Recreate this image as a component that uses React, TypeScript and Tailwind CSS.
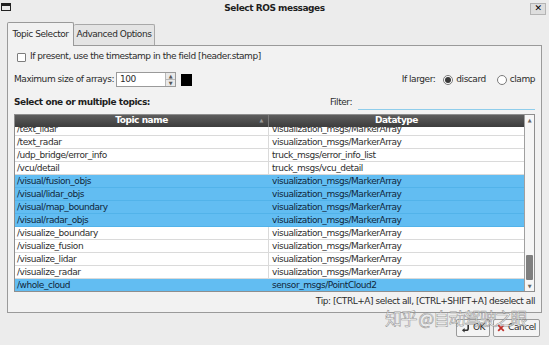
import React from 'react';

type Row = { topic: string; type: string; selected?: boolean };

const rows: Row[] = [
  { topic: '/text_lidar', type: 'visualization_msgs/MarkerArray' },
  { topic: '/text_radar', type: 'visualization_msgs/MarkerArray' },
  { topic: '/udp_bridge/error_info', type: 'truck_msgs/error_info_list' },
  { topic: '/vcu/detail', type: 'truck_msgs/vcu_detail' },
  { topic: '/visual/fusion_objs', type: 'visualization_msgs/MarkerArray', selected: true },
  { topic: '/visual/lidar_objs', type: 'visualization_msgs/MarkerArray', selected: true },
  { topic: '/visual/map_boundary', type: 'visualization_msgs/MarkerArray', selected: true },
  { topic: '/visual/radar_objs', type: 'visualization_msgs/MarkerArray', selected: true },
  { topic: '/visualize_boundary', type: 'visualization_msgs/MarkerArray' },
  { topic: '/visualize_fusion', type: 'visualization_msgs/MarkerArray' },
  { topic: '/visualize_lidar', type: 'visualization_msgs/MarkerArray' },
  { topic: '/visualize_radar', type: 'visualization_msgs/MarkerArray' },
  { topic: '/whole_cloud', type: 'sensor_msgs/PointCloud2', selected: true },
];

function Radio({ checked }: { checked?: boolean }) {
  return (
    <span className="flex h-[10px] w-[10px] items-center justify-center rounded-full border border-[#7a7a7a] bg-white">
      {checked && <span className="h-[6px] w-[6px] rounded-full bg-[#3a3a3a]" />}
    </span>
  );
}

function TopicRow({ row }: { row: Row }) {
  return (
    <div
      className={
        row.selected
          ? 'flex h-[13px] items-center border-b border-[#52b3ea] bg-[#62bdf2] text-[#10263a]'
          : 'flex h-[13px] items-center border-b border-[#dadada] bg-white text-[#2e2e2e]'
      }
    >
      <div className={row.selected ? 'w-[254px] pl-[2px] leading-[12px]' : 'w-[254px] pl-[2px] leading-[12px] border-r border-[#dadada] h-full'}>
        {row.topic}
      </div>
      <div className="flex-1 pl-[3px] leading-[12px]">{row.type}</div>
    </div>
  );
}

export default function App() {
  return (
    <div className="relative flex h-[345px] w-[549px] flex-col overflow-hidden bg-[#ececec] font-['DejaVu_Sans',sans-serif] text-[9px] tracking-[-0.45px] text-[#2b2b2b]">
      {/* title bar */}
      <div className="relative flex h-[17px] items-center justify-center">
        <span className="absolute left-[1px] top-[3px] h-[8px] w-[10px] border border-t-[3px] border-[#222]" />
        <span className="font-bold text-[#1e1e1e]">Select ROS messages</span>
        <span className="absolute right-[3px] top-[3px] flex h-[12px] w-[16px] items-center justify-center border border-[#b4b4b4] bg-[#dedede] text-[9px] font-bold text-black">
          ✕
        </span>
      </div>

      {/* tabs */}
      <div className="mt-[5px] flex items-end px-[7px]">
        <div className="relative z-10 -mb-px flex h-[24px] w-[67px] items-center justify-center rounded-t-[2px] border border-b-0 border-[#9a9a9a] bg-[#f2f2f2]">
          Topic Selector
        </div>
        <div className="flex h-[21px] w-[81px] items-center justify-center rounded-t-[2px] border border-l-0 border-b-0 border-[#a8a8a8] bg-[#e4e4e4]">
          Advanced Options
        </div>
      </div>

      {/* pane */}
      <div className="mx-[7px] flex flex-col border border-[#9a9a9a] bg-[#f2f2f2] px-[6px] pb-[4px] pt-[4px]">
        <div className="flex h-[14px] items-center gap-[4px] pl-[3px]">
          <span className="h-[9px] w-[9px] rounded-[1px] border border-[#7d7d7d] bg-white" />
          <span>If present, use the timestamp in the field [header.stamp]</span>
        </div>

        <div className="mt-[8px] flex h-[15px] items-center">
          <span className="w-[102px]">Maximum size of arrays:</span>
          <div className="flex h-[15px] w-[60px] items-stretch border border-[#9a9a9a] bg-white">
            <span className="flex flex-1 items-center pl-[3px]">100</span>
            <div className="flex w-[10px] flex-col border-l border-[#b8b8b8] bg-[#e9e9e9]">
              <span className="flex flex-1 items-center justify-center border-b border-[#b8b8b8] text-[5px] leading-none text-[#555]">▲</span>
              <span className="flex flex-1 items-center justify-center text-[5px] leading-none text-[#555]">▼</span>
            </div>
          </div>
          <span className="ml-[5px] h-[12px] w-[11px] bg-black" />
          <div className="ml-auto flex items-center">
            <span className="mr-[8px]">If larger:</span>
            <Radio checked />
            <span className="ml-[3px] mr-[11px]">discard</span>
            <Radio />
            <span className="ml-[3px]">clamp</span>
          </div>
        </div>

        <div className="mt-[9px] flex h-[14px] items-center">
          <span className="font-bold text-[#1e1e1e]">Select one or multiple topics:</span>
          <span className="ml-auto mr-[6px]">Filter:</span>
          <div className="h-[14px] w-[177px] border-b border-[#8fcdeb]" />
        </div>

        {/* table */}
        <div className="mt-[4px] flex h-[178px] border border-[#8e8e8e] bg-white">
          <div className="flex w-[509px] flex-col">
            <div className="flex h-[12px] items-center bg-gradient-to-b from-[#5e5e5e] to-[#3d3d3d] font-bold text-white">
              <div className="relative flex h-full w-[254px] items-center justify-center border-r border-[#7a7a7a]">
                Topic name
                <span className="absolute right-[5px] top-[3px] text-[5px] leading-none text-[#9a9a9a]">▲</span>
              </div>
              <div className="flex flex-1 items-center justify-center">Datatype</div>
            </div>
            <div className="h-[165px] overflow-hidden">
              <div className="-mt-[4px]">
                {rows.map((r) => (
                  <TopicRow key={r.topic} row={r} />
                ))}
              </div>
            </div>
          </div>
          <div className="flex w-[10px] flex-col border-l border-[#a0a0a0] bg-[#f6f6f6]">
            <span className="flex h-[10px] items-center justify-center text-[5px] leading-none text-[#666]">▲</span>
            <div className="h-[130px]" />
            <span className="mx-auto h-[25px] w-[7px] rounded-[1px] bg-[#7f7f7f]" />
            <div className="flex-1" />
            <span className="flex h-[10px] items-center justify-center text-[5px] leading-none text-[#666]">▼</span>
          </div>
        </div>

        <div className="mt-[4px] flex h-[12px] items-center justify-end">
          Tip: [CTRL+A] select all, [CTRL+SHIFT+A] deselect all
        </div>
      </div>

      {/* buttons */}
      <div className="mt-[6px] flex justify-end gap-[3px] pr-[9px]">
        <div className="flex h-[18px] w-[34px] items-center justify-center gap-[3px] rounded-[2px] border border-[#9a9a9a] bg-[#f4f4f4]">
          <svg width="9" height="9" viewBox="0 0 10 10">
            <path d="M8 1 V5 Q8 7 6 7 H3" fill="none" stroke="#333" strokeWidth="1.8" />
            <path d="M1 7 L4 4.5 V9.5 Z" fill="#333" />
          </svg>
          <span>OK</span>
        </div>
        <div className="flex h-[18px] w-[47px] items-center justify-center gap-[3px] rounded-[2px] border border-[#9a9a9a] bg-[#f4f4f4]">
          <svg width="8" height="8" viewBox="0 0 10 10">
            <path d="M1.5 1.5 L8.5 8.5 M8.5 1.5 L1.5 8.5" stroke="#c0302a" strokeWidth="2.2" />
          </svg>
          <span>Cancel</span>
        </div>
      </div>

      {/* watermark */}
      <div className="pointer-events-none absolute left-[385px] top-[309px] font-['Noto_Sans_CJK_SC',sans-serif] text-[17px] leading-none tracking-[-1.5px] text-white/75 [-webkit-text-stroke:0.6px_rgba(110,110,110,0.7)]">
        知乎 @自动驾驶之眼
      </div>
    </div>
  );
}
